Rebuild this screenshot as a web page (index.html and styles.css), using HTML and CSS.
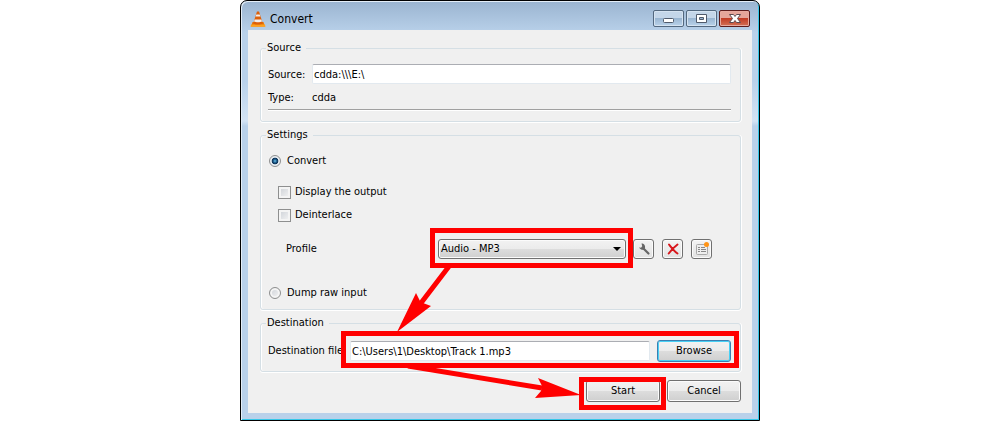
FILE: index.html
```
<!DOCTYPE html>
<html lang="en">
<head>
	<meta charset="utf-8">
	<title>Convert</title>
	<link rel="stylesheet" href="styles.css">
</head>
<body>
	<div class="window">
		<div class="titlebar">
			<svg class="cone" viewBox="0 0 16 16" width="16" height="16">
				<path d="M2.500 11h11l1.500 4.500H1z" fill="#e87808"/>
				<path d="M1 13.500h14l.5 2.200H.5z" fill="#ffa21e"/>
				<path d="M7 .5h2L12.800 12.500c-2 1.400-7.600 1.400-9.600 0z" fill="#dd600a"/>
				<path d="M6.300 3.500h3.400l.7 2H5.600z" fill="#f3f0ed"/>
				<path d="M4.700 8.500h6.600l.7 2c-2 1-6 1-8 0z" fill="#f3f0ed"/>
			</svg>
			<span class="title">Convert</span>
			<div class="caption-buttons">
				<button class="caption" aria-label="Minimize">
					<svg viewBox="0 0 29 15" width="29" height="15"><rect x="9.500" y="7.500" width="10" height="4" rx="1" fill="#fff" stroke="#505a6b"/></svg>
				</button>
				<button class="caption" aria-label="Maximize">
					<svg viewBox="0 0 29 15" width="29" height="15"><path d="M9.500 3.500h10v8h-10zM12.500 6.500v2h4v-2z" fill="#fff" fill-rule="evenodd" stroke="#505a6b"/></svg>
				</button>
				<button class="caption close" aria-label="Close">
					<svg viewBox="0 0 29 15" width="29" height="15"><path d="M9.500 3.500h4l1.500 2 1.500-2h4L17.500 7.500l3 4h-4L15 9.500l-1.500 2h-4l3-4z" fill="#fff" stroke="#5e4a50"/></svg>
				</button>
			</div>
		</div>

		<form class="client">
			<fieldset class="group source">
				<legend>Source</legend>
				<div class="row">
					<label class="key" for="source">Source:</label>
					<input class="text" id="source" type="text" value="cdda:\\\E:\">
				</div>
				<div class="row type">
					<span class="key">Type:</span>
					<span class="value">cdda</span>
				</div>
				<hr>
			</fieldset>

			<fieldset class="group settings">
				<legend>Settings</legend>
				<label class="option"><input class="radio" type="radio" name="mode" checked>Convert</label>
				<div class="checks">
					<label class="check"><input class="box" type="checkbox">Display the output</label>
					<label class="check"><input class="box" type="checkbox">Deinterlace</label>
				</div>
				<div class="profile">
					<label class="profile-label" for="profile">Profile</label>
					<div class="combo">
						<select id="profile"><option>Audio - MP3</option></select>
					</div>
					<div class="tools">
						<button class="tool" type="button" aria-label="Edit profile">
							<svg viewBox="0 0 16 16" width="16" height="16"><path d="M6.500 6.500l6 6" stroke="#666" stroke-width="2.200" fill="none" stroke-linecap="round"/><path d="M5.500 2.500c2.500 0 4 2 3.500 4.500S5 9.500 3 6.500l2.500.3.800-1.300z" fill="#666"/></svg>
						</button>
						<button class="tool" type="button" aria-label="Delete profile">
							<svg viewBox="0 0 16 16" width="16" height="16"><path d="M4 3.500c2 2.500 5 6.500 8.500 9M12.500 3.500C9 6 6 9.500 3.700 12.500" stroke="#d8171c" stroke-width="2" fill="none" stroke-linecap="round"/></svg>
						</button>
						<button class="tool" type="button" aria-label="New profile">
							<svg viewBox="0 0 16 16" width="16" height="16"><rect x="2.500" y="3.500" width="11" height="10" rx="1" fill="#eee" stroke="#aaa"/><path d="M4 6.500h2M7 6.500h4M4 8.500h2M7 8.500h5M4 10.500h2M7 10.500h5" stroke="#888"/><circle cx="12.500" cy="3.500" r="2.500" fill="#ff9416"/></svg>
						</button>
					</div>
				</div>
				<label class="option dump"><input class="radio" type="radio" name="mode">Dump raw input</label>
			</fieldset>

			<fieldset class="group destination">
				<legend>Destination</legend>
				<div class="row">
					<label class="file-label" for="file">Destination file:</label>
					<input class="text" id="file" type="text" value="C:\Users\1\Desktop\Track 1.mp3">
					<button class="push default" type="button">Browse</button>
				</div>
			</fieldset>

			<div class="actions">
				<button class="push" type="button">Start</button>
				<button class="push" type="button">Cancel</button>
			</div>
		</form>

		<!-- red step markers over the dialog -->
		<svg class="marks" viewBox="0 0 520 421" width="520" height="421">
			<g fill="none" stroke="#f00" stroke-width="5">
				<rect x="192.500" y="230.500" width="198" height="35"/>
				<rect x="103.500" y="333.500" width="393" height="32"/>
				<rect x="341.500" y="379.500" width="82" height="28"/>
			</g>
			<g fill="none" stroke="#f00" stroke-width="5">
				<path d="M210 265l-29 38M168 366l134 22"/>
			</g>
			<g fill="#f00">
				<path d="M157 332l19-39 4 8 3 2 8 3z"/>
				<path d="M341 395l-43-17 4 8-1 5-6 7z"/>
			</g>
		</svg>
	</div>
</body>
</html>
```

FILE: styles.css
```
* {
	box-sizing: border-box;
}
body {
	margin: 0;
	background: #fff;
	color: #000;
	font-family: "DejaVu Sans Condensed", "Noto Sans", sans-serif;
	font-size: 11px;
	line-height: 14px;
}
input, select, button {
	margin: 0;
	font: inherit;
	color: inherit;
}
.window {
	position: relative;
	max-width: 520px;
	margin: 0 auto;
	padding: 0 7px 7px;
	border: 1px solid #000;
	border-radius: 7px 7px 0 0;
	background: linear-gradient(#9ab4d0, #b9d1ea 32px, #b9d1ea 80px, #d3e3f4 120px, #b9d1ea 125px);
	box-shadow: inset 1px 1px #e4eef8, inset -1px -1px #35c7e8;
}
.titlebar {
	display: flex;
	align-items: center;
	height: 29px;
	padding: 6px 2px 0;
}
.title {
	margin-left: 4px;
	font-size: 12px;
}
.caption-buttons {
	display: flex;
	gap: 2px;
	margin-left: auto;
}
.caption {
	display: flex;
	width: 31px;
	height: 17px;
	padding: 0;
	border: 1px solid #53687f;
	border-radius: 2px;
	background: linear-gradient(#c4d6e9 50%, #9ab6d2 50%, #bad2ea);
	box-shadow: inset 0 0 0 1px #d5e3f1;
}
.close {
	border-color: #5c1c1c;
	background: linear-gradient(#e5a59a 50%, #c23c25 50%, #d27157);
	box-shadow: inset 0 0 0 1px #e7aaa0;
}
.client {
	padding: 11px 11px 11px 12px;
	background: #f0f0f0;
}
.group {
	min-width: 0;
	margin: 0 0 6px;
	padding: 9px 9px 0 7px;
	border: 1px solid #d5dfe5;
	border-radius: 3px;
	box-shadow: inset 1px 0 #fff, 0 1px #fff, 1px 0 #fff;
}
legend {
	padding: 0 5px 0 1px;
	margin-left: -2px;
}
.row {
	display: flex;
	align-items: center;
}
.key {
	width: 44px;
}
.text {
	flex: 1;
	min-width: 0;
	height: 20px;
	padding: 2px 1px;
	border: 1px solid #e2e9ef;
	border-top-color: #abadb3;
	border-radius: 2px;
	background: #fff;
	outline: none;
}
.source .key {
	padding-top: 1px;
}
.type {
	padding: 6px 0 4px;
}
hr {
	margin: 0 0 10px;
	border: 0;
	border-top: 1px solid #a0a0a0;
	border-bottom: 1px solid #fff;
}
.settings {
	padding-bottom: 9px;
}
.option,
.check {
	display: flex;
	align-items: center;
	width: max-content;
}
.option {
	gap: 6px;
	margin: 3px 0 0 1px;
	height: 14px;
}
.radio,
.box {
	appearance: none;
	flex: none;
	width: 13px;
	height: 13px;
	border: 1px solid #8e8f8f;
	background: linear-gradient(135deg, #cbcfd5, #f6f6f6);
	box-shadow: inset 0 0 0 2px #f4f4f4;
}
.radio {
	width: 12px;
	height: 12px;
	border-radius: 50%;
}
.radio:checked {
	background: radial-gradient(circle, #6bc4ec, #1b5786 25%, #0b3154 42%, #e8edf2 52%);
	box-shadow: none;
}
.checks {
	display: grid;
	gap: 9px;
	padding: 17px 0 0 10px;
}
.check {
	gap: 4px;
}
.profile {
	display: flex;
	align-items: center;
	padding: 17px 0 0 18px;
}
.profile-label {
	width: 152px;
}
.combo {
	position: relative;
	width: 188px;
}
.combo::after {
	content: "";
	position: absolute;
	top: 8px;
	right: 5px;
	border: 4px solid transparent;
	border-top-color: #000;
	border-bottom: 0;
}
.combo select,
.tool,
.push {
	border: 1px solid #707070;
	border-radius: 3px;
	background: linear-gradient(#f2f2f2, #ebebeb 49%, #dddddd 50%, #cfcfcf);
	box-shadow: inset 0 0 0 1px #fbfbfb;
}
.combo select {
	appearance: none;
	display: block;
	width: 100%;
	height: 20px;
	padding: 0 16px 0 2px;
}
.tools {
	display: flex;
	gap: 8px;
	margin-left: 7px;
}
.tool {
	display: flex;
	align-items: center;
	justify-content: center;
	width: 21px;
	height: 20px;
	padding: 0;
	background: linear-gradient(#f4f4f4, #e2e2e2);
}
.dump {
	margin-top: 27px;
}
.destination {
	margin-bottom: 8px;
	padding: 10px 9px 9px 7px;
}
.file-label {
	width: 82px;
	white-space: nowrap;
}
.push {
	width: 74px;
	height: 22px;
	padding: 0;
}
.destination .push {
	margin-left: 7px;
}
.push.default {
	border-color: #3c7fb1;
	box-shadow: inset 0 0 0 1px #48d0f5;
}
.actions {
	display: flex;
	justify-content: flex-end;
	gap: 7px;
}
.marks {
	position: absolute;
	top: -1px;
	left: -1px;
	pointer-events: none;
}
```
